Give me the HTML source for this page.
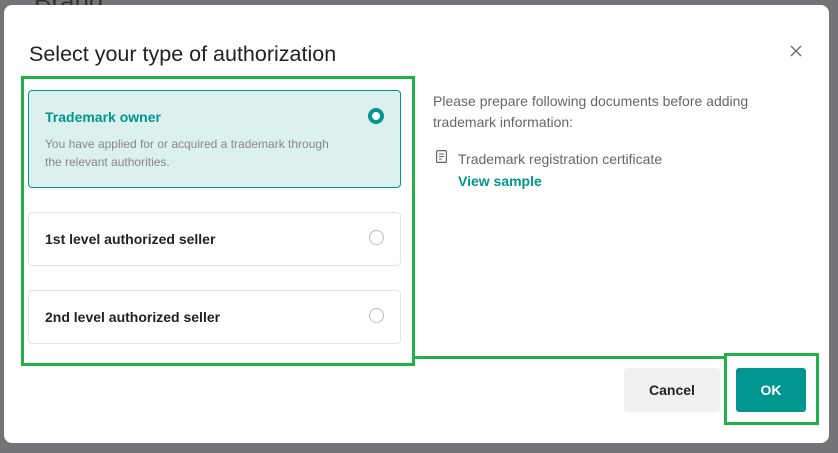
<!DOCTYPE html>
<html><head><style>
body{margin:0;width:838px;height:453px;background:#737478;position:relative;overflow:hidden;font-family:"Liberation Sans",sans-serif}
.bg{position:absolute;left:34px;top:-14px;font-size:26px;color:#333}
.modal{position:absolute;left:4px;top:5px;width:825px;height:438px;background:#fff;border-radius:8px}
.t{position:absolute;left:29px;top:42px;font-size:21.5px;color:#222}
.x{position:absolute;left:789px;top:44px}
.card{position:absolute;left:28px;width:373px;border:1px solid #e3e3e3;border-radius:4px;background:#fff;box-sizing:border-box}
.card .h{position:absolute;left:16px;font-size:14px;font-weight:bold;color:#222}
.r{position:absolute;right:16px;width:15px;height:15px;border:1px solid #bbb;border-radius:50%;box-sizing:border-box}
.sel{background:#dcf0ee;border-color:#00968f}
.g{position:absolute;border:3px solid #21b14b;box-sizing:border-box}
.btn{position:absolute;top:368px;height:44px;border-radius:3px;font-size:14px;font-weight:bold;text-align:center;line-height:44px}
.p{position:absolute;left:433px;top:91px;font-size:14px;color:#666;line-height:21px;width:360px}
</style></head><body>
<div class="bg">Brand</div>
<div class="modal"></div>
<div class="t">Select your type of authorization</div>
<svg class="x" width="14" height="14" viewBox="0 0 14 14"><path d="M2 2L12 12M12 2L2 12" stroke="#666" stroke-width="1.3"/></svg>
<div class="card sel" style="top:90px;height:98px">
<div class="h" style="top:18px;color:#00968f">Trademark owner</div>
<div style="position:absolute;left:16px;top:44px;font-size:12px;color:#888;line-height:18px">You have applied for or acquired a trademark through<br>the relevant authorities.</div>
<div class="r" style="top:17px;border:4px solid #00968f;width:16px;height:16px;background:#fff;right:16px"></div>
</div>
<div class="card" style="top:212px;height:54px"><div class="h" style="top:18px">1st level authorized seller</div><div class="r" style="top:17px"></div></div>
<div class="card" style="top:290px;height:54px"><div class="h" style="top:18px">2nd level authorized seller</div><div class="r" style="top:17px"></div></div>
<div class="p">Please prepare following documents before adding trademark information:</div>
<svg style="position:absolute;left:436px;top:150px" width="11" height="13" viewBox="0 0 11 13"><rect x="0.6" y="0.6" width="9.8" height="11.8" rx="1.2" fill="none" stroke="#666" stroke-width="1.2"/><path d="M3 4h5M3 6.5h5M3 9h3" stroke="#666" stroke-width="1.1"/></svg>
<div style="position:absolute;left:458px;top:151px;font-size:14px;color:#666">Trademark registration certificate</div>
<div style="position:absolute;left:458px;top:173px;font-size:14px;color:#00968f;font-weight:bold">View sample</div>
<div class="btn" style="left:624px;width:96px;background:#f1f1f1;color:#222">Cancel</div>
<div class="btn" style="left:736px;width:70px;background:#00968f;color:#fff">OK</div>
<div class="g" style="left:21px;top:76px;width:394px;height:290px"></div>
<div style="position:absolute;left:413px;top:356px;width:312px;height:3px;background:#21b14b"></div>
<div class="g" style="left:724px;top:353px;width:95px;height:72px"></div>
</body></html>
